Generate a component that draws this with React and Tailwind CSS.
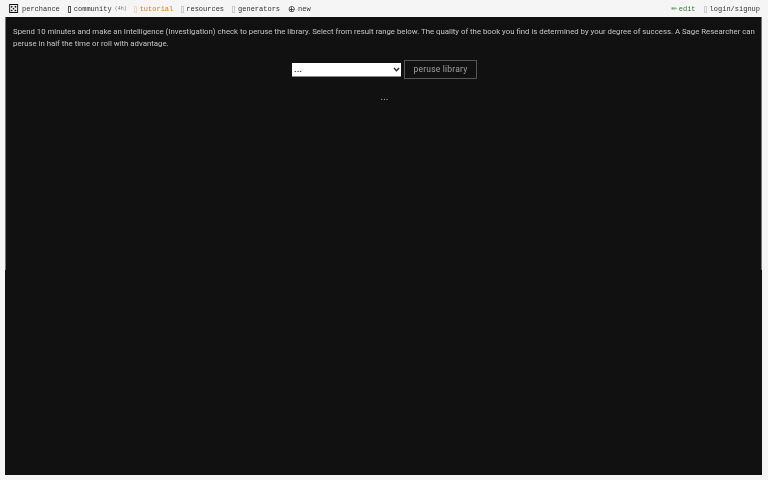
function Tofu({ className }) {
  return <span className={`block h-[7px] w-[3px] border-[0.5px] ${className}`} />;
}

function NavItem({ icon, label, note, className = '', color = 'text-[#333]' }) {
  return (
    <span className={`flex items-center ${color} ${className}`}>
      {icon}
      <span>{label}</span>
      {note && <span className="ml-[3px] pt-[2px] text-[5px] text-[#777]">{note}</span>}
    </span>
  );
}

export default function App() {
  return (
    <div className="h-[480px] w-[768px] overflow-hidden bg-[#f5f5f5] font-['Roboto',sans-serif]">
      <div className="flex h-[17px] items-center justify-between pl-[9px] pr-[8px] pt-[1px] font-['Liberation_Mono',monospace] text-[7px] will-change-transform">
        <div className="flex items-center">
          <NavItem
            label="perchance"
            icon={<span className="mr-[4px] flex w-[9px] justify-center font-['DejaVu_Sans',sans-serif] text-[12px] leading-none text-[#111]">⚄</span>}
          />
          <NavItem label="community" note="(4h)" className="ml-[8px]" icon={<span className="mr-[3px]"><Tofu className="border-[#555]" /></span>} />
          <NavItem label="tutorial" className="ml-[7px]" color="text-[#e07b1f]" icon={<span className="mr-[3px]"><Tofu className="border-[#f2d6bd]" /></span>} />
          <NavItem label="resources" className="ml-[8px]" icon={<span className="mr-[2px]"><Tofu className="border-[#ccc]" /></span>} />
          <NavItem label="generators" className="ml-[8px]" icon={<span className="mr-[3px]"><Tofu className="border-[#ccc]" /></span>} />
          <NavItem
            label="new"
            className="ml-[8px]"
            icon={<span className="mr-[3px] flex w-[7px] justify-center pt-[1px] font-['DejaVu_Sans',sans-serif] text-[9px] leading-none text-[#222]">⊕</span>}
          />
        </div>
        <div className="flex items-center">
          <NavItem
            label="edit"
            color="text-[#2a7d2a]"
            icon={<span className="mr-[2px] flex w-[5px] justify-center font-['DejaVu_Sans',sans-serif]">✏</span>}
          />
          <NavItem label="login/signup" className="ml-[8px]" icon={<span className="mr-[3px]"><Tofu className="border-[#ccc]" /></span>} />
        </div>
      </div>
      <div className="mx-[5px] h-[458px] w-[757px] bg-[#111111]">
        <div className="h-[253px] border-x border-[#777] pl-[7px] pr-[5px] pt-[9px]">
          <p className="text-[7.8px] leading-[12px] text-[#c4c4c4] will-change-transform">
            Spend 10 minutes and make an Intelligence (Investigation) check to peruse the library. Select from result range below. The quality of the book you find is determined by your degree of success. A Sage Researcher can peruse in half the time or roll with advantage.
          </p>
          <div className="mt-[10px] flex items-center justify-center gap-[3px]">
            <div className="relative h-[14px] w-[109px]">
              <select className="block h-full w-full appearance-none border-b border-[#888] bg-white pl-[2px] text-[10px] leading-none text-black">
                <option>...</option>
              </select>
              <svg viewBox="0 0 8 6" className="absolute right-[1px] top-[4px] h-[5px] w-[7px]">
                <path d="M1 1.2 4 4.4 7 1.2" fill="none" stroke="#222" strokeWidth="1.6" />
              </svg>
            </div>
            <button className="h-[19px] w-[73px] border border-[#555] text-[8.5px] tracking-[0.2px] text-[#a0a0a0] will-change-transform">peruse library</button>
          </div>
          <div className="mt-[10px] text-center text-[10px] leading-[16px] text-[#aaa] will-change-transform">...</div>
        </div>
      </div>
    </div>
  );
}
